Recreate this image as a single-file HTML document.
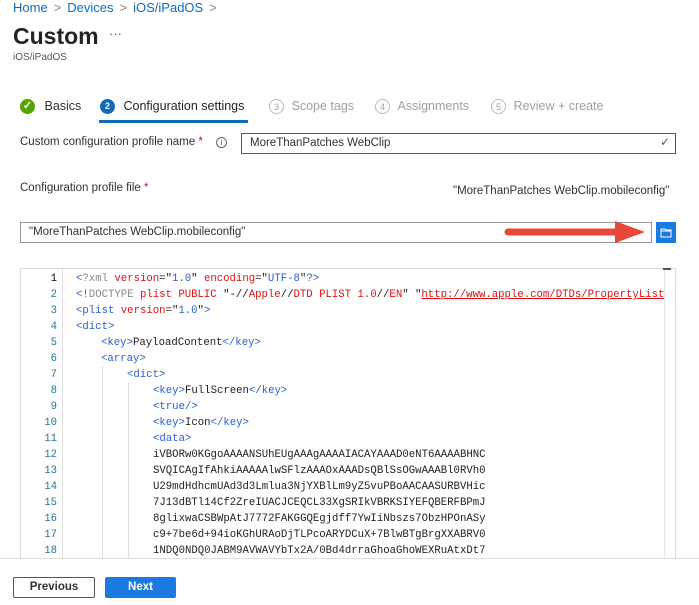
<!DOCTYPE html>
<html><head><meta charset="utf-8"><style>
*{margin:0;padding:0;box-sizing:border-box}
body{width:699px;height:605px;background:#fff;font-family:"Liberation Sans",sans-serif;color:#323130;position:relative;overflow:hidden}
.a{position:absolute;white-space:nowrap}
.bc{font-size:13px;color:#0f6cbd}
.bc span{color:#888;margin:0 6px}
.step{font-size:12.5px}
.circ{display:inline-block;width:15px;height:15px;border-radius:50%;text-align:center;font-size:9px;line-height:15px;vertical-align:middle}
.code{position:absolute;left:0;top:2px;width:664px;height:556px;overflow:hidden;font-family:"Liberation Mono",monospace;font-size:10.67px;line-height:16px}
.ln{position:absolute;left:20px;width:37px;text-align:right;color:#237893;}
.t{position:absolute;left:76px;color:#222;white-space:nowrap}
.tg{color:#2a5fcc}.at{color:#d11}.st{color:#2a5fcc}.gr{color:#888}
.guide{position:absolute;width:1px;background:#ddd}
</style></head><body>
<div class="a bc" style="left:13px;top:0px">Home<span>&gt;</span>Devices<span>&gt;</span>iOS/iPadOS<span>&gt;</span></div>
<div class="a" style="left:13px;top:23px;font-size:23px;font-weight:bold;color:#252423">Custom</div>
<div class="a" style="left:109px;top:26px;font-size:13px;color:#555">···</div>
<div class="a" style="left:13px;top:52px;font-size:10px;color:#555">iOS/iPadOS</div>

<div class="a step" style="left:20px;top:99px"><span class="circ" style="background:#57a300;color:#fff;font-size:11px;font-weight:bold">✓</span> <span style="margin-left:6px">Basics</span></div>
<div class="a step" style="left:100px;top:99px"><span class="circ" style="background:#0f6cbd;color:#fff;font-weight:bold">2</span> <span style="margin-left:5px;color:#252423">Configuration settings</span></div>
<div class="a" style="left:99px;top:120px;width:149px;height:3px;background:#0f6cbd"></div>
<div class="a step" style="left:269px;top:99px;color:#a19f9d"><span class="circ" style="border:1px solid #bbb">3</span> <span style="margin-left:4px">Scope tags</span></div>
<div class="a step" style="left:375px;top:99px;color:#a19f9d"><span class="circ" style="border:1px solid #bbb">4</span> <span style="margin-left:4px">Assignments</span></div>
<div class="a step" style="left:491px;top:99px;color:#a19f9d"><span class="circ" style="border:1px solid #bbb">5</span> <span style="margin-left:4px">Review + create</span></div>

<div class="a" style="left:20px;top:136px;font-size:11.5px">Custom configuration profile name <span style="color:#a4262c">*</span></div>
<div class="a" style="left:216px;top:137px;width:11px;height:11px;border:1px solid #666;border-radius:50%;font-size:8px;text-align:center;line-height:9px;color:#555">i</div>
<div class="a" style="left:241px;top:133px;width:435px;height:21px;border:1px solid #0f6cbd;font-size:11.5px;padding:2px 8px;line-height:15px">MoreThanPatches WebClip</div>
<div class="a" style="left:660px;top:135px;font-size:12px;color:#555">✓</div>

<div class="a" style="left:20px;top:182px;font-size:11.5px">Configuration profile file <span style="color:#a4262c">*</span></div>
<div class="a" style="left:453px;top:185px;font-size:11.5px">"MoreThanPatches WebClip.mobileconfig"</div>
<div class="a" style="left:20px;top:222px;width:632px;height:21px;border:1px solid #999;font-size:11.5px;padding:2px 8px;line-height:15px">"MoreThanPatches WebClip.mobileconfig"</div>
<div class="a" style="left:656px;top:222px;width:20px;height:21px;background:#1a7ae0"><svg width="20" height="21"><path d="M5 7h4l1 1h5v7H5z M5 9h10" fill="none" stroke="#fff" stroke-width="1"/></svg></div>
<svg class="a" style="left:500px;top:218px" width="150" height="30"><path d="M8 14 L120 14" stroke="#e8473a" stroke-width="7" stroke-linecap="round"/><path d="M115 3 L145 14 L115 25 Z" fill="#e8473a"/></svg>

<div class="a" style="left:20px;top:268px;width:656px;height:291px;border:1px solid #ddd;border-bottom:none"></div>
<div class="a" style="left:62px;top:269px;width:1px;height:290px;background:#ddd"></div>
<div class="a" style="left:664px;top:269px;width:1px;height:290px;background:#e5e5e5"></div>
<div class="a" style="left:663px;top:268px;width:8px;height:2px;background:#555"></div>
<div class="a" style="left:0;top:558px;width:699px;height:1px;background:#e1dfdd"></div>
<div class="guide" style="left:102px;top:366px;height:192px"></div>
<div class="guide" style="left:128px;top:382px;height:176px"></div>
<div class="code">
<div class="ln" style="top:269px;color:#111">1</div><div class="t" style="top:269px"><span class="tg">&lt;</span><span class="gr">?xml</span> <span class="at">version</span>="<span class="st">1.0</span>" <span class="at">encoding</span>="<span class="st">UTF-8</span>"<span class="tg">?&gt;</span></div>
<div class="ln" style="top:285px">2</div><div class="t" style="top:285px"><span class="tg">&lt;!</span><span class="gr">DOCTYPE</span> <span class="at">plist PUBLIC</span> "-//<span class="at">Apple</span>//<span class="at">DTD PLIST 1.0</span>//<span class="at">EN</span>" "<span class="at" style="text-decoration:underline">http://www.apple.com/DTDs/PropertyList-1.0.dtd</span>"&gt;</div>
<div class="ln" style="top:301px">3</div><div class="t" style="top:301px"><span class="tg">&lt;plist</span> <span class="at">version</span>="<span class="st">1.0</span>"<span class="tg">&gt;</span></div>
<div class="ln" style="top:317px">4</div><div class="t tg" style="top:317px">&lt;dict&gt;</div>
<div class="ln" style="top:333px">5</div><div class="t" style="top:333px;left:101px"><span class="tg">&lt;key&gt;</span>PayloadContent<span class="tg">&lt;/key&gt;</span></div>
<div class="ln" style="top:349px">6</div><div class="t tg" style="top:349px;left:101px">&lt;array&gt;</div>
<div class="ln" style="top:365px">7</div><div class="t tg" style="top:365px;left:127px">&lt;dict&gt;</div>
<div class="ln" style="top:381px">8</div><div class="t" style="top:381px;left:153px"><span class="tg">&lt;key&gt;</span>FullScreen<span class="tg">&lt;/key&gt;</span></div>
<div class="ln" style="top:397px">9</div><div class="t tg" style="top:397px;left:153px">&lt;true/&gt;</div>
<div class="ln" style="top:413px">10</div><div class="t" style="top:413px;left:153px"><span class="tg">&lt;key&gt;</span>Icon<span class="tg">&lt;/key&gt;</span></div>
<div class="ln" style="top:429px">11</div><div class="t tg" style="top:429px;left:153px">&lt;data&gt;</div>
<div class="ln" style="top:445px">12</div><div class="t" style="top:445px;left:153px">iVBORw0KGgoAAAANSUhEUgAAAgAAAAIACAYAAAD0eNT6AAAABHNC</div>
<div class="ln" style="top:461px">13</div><div class="t" style="top:461px;left:153px">SVQICAgIfAhkiAAAAAlwSFlzAAAOxAAADsQBlSsOGwAAABl0RVh0</div>
<div class="ln" style="top:477px">14</div><div class="t" style="top:477px;left:153px">U29mdHdhcmUAd3d3Lmlua3NjYXBlLm9yZ5vuPBoAACAASURBVHic</div>
<div class="ln" style="top:493px">15</div><div class="t" style="top:493px;left:153px">7J13dBTl14Cf2ZreIUACJCEQCL33XgSRIkVBRKSIYEFQBERFBPmJ</div>
<div class="ln" style="top:509px">16</div><div class="t" style="top:509px;left:153px">8glixwaCSBWpAtJ7772FAKGGQEgjdff7YwIiNbszs7ObzHPOnASy</div>
<div class="ln" style="top:525px">17</div><div class="t" style="top:525px;left:153px">c9+7be6d+94ioKGhURAoDjTLPcoARYDCuX+7BlwBTgBrgXXABRV0</div>
<div class="ln" style="top:541px">18</div><div class="t" style="top:541px;left:153px">1NDQ0NDQ0JABM9AVWAVYbTx2A/0Bd4drraGhoaGhoWEXRuAtxDt7</div>
</div>

<div class="a" style="left:13px;top:577px;width:82px;height:21px;border:1px solid #555;border-radius:2px;font-size:11.5px;font-weight:bold;text-align:center;line-height:19px">Previous</div>
<div class="a" style="left:105px;top:577px;width:71px;height:21px;background:#1a7ae0;border-radius:2px;font-size:11.5px;font-weight:bold;color:#fff;text-align:center;line-height:21px">Next</div>
</body></html>
